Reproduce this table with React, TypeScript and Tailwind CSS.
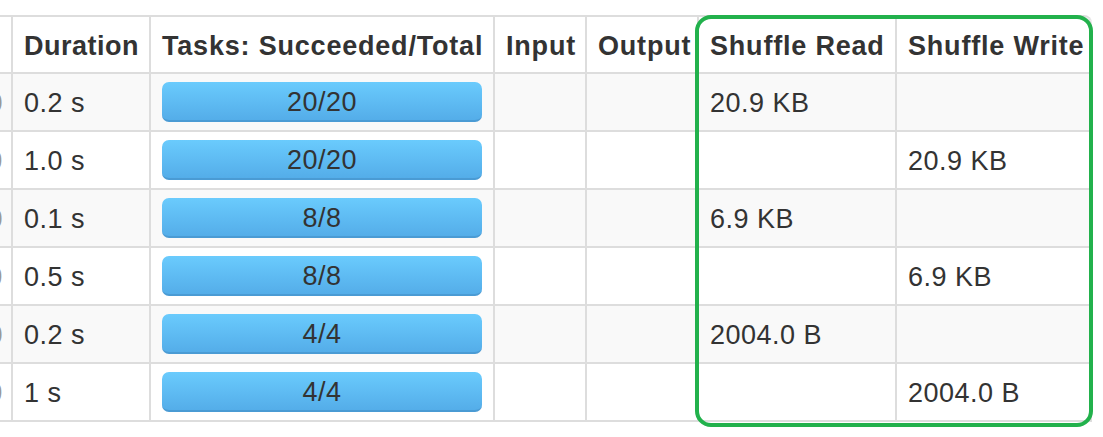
const rows = [
  { submitted: '2015/03/24 16:41:10', duration: '0.2 s', tasks: '20/20', read: '20.9 KB', write: '' },
  { submitted: '2015/03/24 16:41:09', duration: '1.0 s', tasks: '20/20', read: '', write: '20.9 KB' },
  { submitted: '2015/03/24 16:41:00', duration: '0.1 s', tasks: '8/8', read: '6.9 KB', write: '' },
  { submitted: '2015/03/24 16:40:59', duration: '0.5 s', tasks: '8/8', read: '', write: '6.9 KB' },
  { submitted: '2015/03/24 16:40:50', duration: '0.2 s', tasks: '4/4', read: '2004.0 B', write: '' },
  { submitted: '2015/03/24 16:40:49', duration: '1 s', tasks: '4/4', read: '', write: '2004.0 B' },
];

const cols = 'grid grid-cols-[213px_138px_344px_92px_112px_198px_195px]';
const cell = 'flex items-center border-r-2 border-[#ddd] px-[11px] whitespace-nowrap overflow-hidden';
const text = `${cell} pt-[3px]`;

function App() {
  return (
    <div className="relative min-h-screen bg-white pt-[15px] font-['Liberation_Sans',Arial,sans-serif] text-[27px] tracking-[0.5px] text-[#333]">
      <div className="w-[1103px] overflow-hidden">
        <div className="-ml-[200px] w-[1292px] border-t-2 border-[#ddd] rounded-tr-[8px]">
          <div className={`${cols} h-[57px] border-b-2 border-[#ddd] font-bold tracking-[0.8px]`}>
            <div className={text}>Submitted</div>
            <div className={`${text} tracking-[0.5px]`}>Duration</div>
            <div className={text}>Tasks: Succeeded/Total</div>
            <div className={text}>Input</div>
            <div className={text}>Output</div>
            <div className={text}>Shuffle Read</div>
            <div className={`${text} rounded-tr-[8px]`}>Shuffle Write</div>
          </div>
          {rows.map((r, i) => (
            <div
              key={i}
              className={`${cols} h-[58px] border-b-2 border-[#ddd] ${i % 2 === 0 ? 'bg-[#f9f9f9]' : 'bg-white'}`}
            >
              <div className={`${text} justify-end pr-[8px] text-[#999]`}>{r.submitted}</div>
              <div className={text}>{r.duration}</div>
              <div className={`${cell} px-[10px]`}>
                <div className="flex h-10 w-full items-center justify-center rounded-[7px] border-b-2 border-[#4a9bd4] bg-linear-to-b from-[#6acbfd] to-[#54ade9] pt-[2px]">
                  {r.tasks}
                </div>
              </div>
              <div className={cell}></div>
              <div className={cell}></div>
              <div className={text}>{r.read}</div>
              <div className={text}>{r.write}</div>
            </div>
          ))}
        </div>
      </div>
      <div className="pointer-events-none absolute left-[695px] top-[15px] h-[412px] w-[398px] rounded-[16px] border-4 border-[#22b14c]" />
    </div>
  );
}

export default App;
